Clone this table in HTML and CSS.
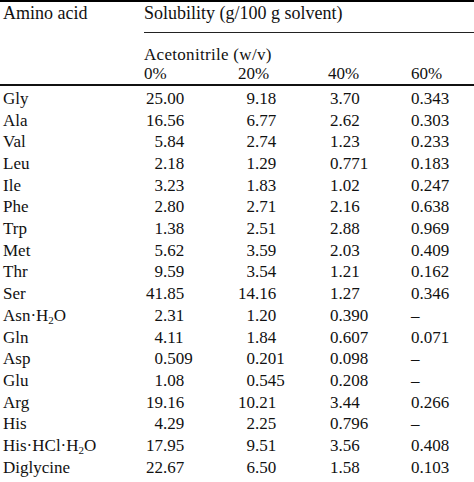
FILE: index.html
```html
<!DOCTYPE html>
<html lang="en">
<head>
<meta charset="utf-8">
<title>Amino acid solubility</title>
<link rel="stylesheet" href="styles.css">
</head>
<body>
<div class="tbl">
  <div class="head">
    <div class="h-label">Amino acid</div>
    <div class="h-main">
      <div class="h-sol">Solubility (g/100 g solvent)</div>
      <div class="h-ace">Acetonitrile (w/v)</div>
      <div class="h-cols"><span>0%</span><span>20%</span><span>40%</span><span>60%</span></div>
    </div>
  </div>
  <div class="body">
    <div class="row"><span class="name">Gly</span><span class="c1"><span class="i">25</span>.00</span><span class="c2"><span class="i">9</span>.18</span><span class="c3"><span class="i">3</span>.70</span><span class="c4"><span class="i">0</span>.343</span></div>
    <div class="row"><span class="name">Ala</span><span class="c1"><span class="i">16</span>.56</span><span class="c2"><span class="i">6</span>.77</span><span class="c3"><span class="i">2</span>.62</span><span class="c4"><span class="i">0</span>.303</span></div>
    <div class="row"><span class="name">Val</span><span class="c1"><span class="i">5</span>.84</span><span class="c2"><span class="i">2</span>.74</span><span class="c3"><span class="i">1</span>.23</span><span class="c4"><span class="i">0</span>.233</span></div>
    <div class="row"><span class="name">Leu</span><span class="c1"><span class="i">2</span>.18</span><span class="c2"><span class="i">1</span>.29</span><span class="c3"><span class="i">0</span>.771</span><span class="c4"><span class="i">0</span>.183</span></div>
    <div class="row"><span class="name">Ile</span><span class="c1"><span class="i">3</span>.23</span><span class="c2"><span class="i">1</span>.83</span><span class="c3"><span class="i">1</span>.02</span><span class="c4"><span class="i">0</span>.247</span></div>
    <div class="row"><span class="name">Phe</span><span class="c1"><span class="i">2</span>.80</span><span class="c2"><span class="i">2</span>.71</span><span class="c3"><span class="i">2</span>.16</span><span class="c4"><span class="i">0</span>.638</span></div>
    <div class="row"><span class="name">Trp</span><span class="c1"><span class="i">1</span>.38</span><span class="c2"><span class="i">2</span>.51</span><span class="c3"><span class="i">2</span>.88</span><span class="c4"><span class="i">0</span>.969</span></div>
    <div class="row"><span class="name">Met</span><span class="c1"><span class="i">5</span>.62</span><span class="c2"><span class="i">3</span>.59</span><span class="c3"><span class="i">2</span>.03</span><span class="c4"><span class="i">0</span>.409</span></div>
    <div class="row"><span class="name">Thr</span><span class="c1"><span class="i">9</span>.59</span><span class="c2"><span class="i">3</span>.54</span><span class="c3"><span class="i">1</span>.21</span><span class="c4"><span class="i">0</span>.162</span></div>
    <div class="row"><span class="name">Ser</span><span class="c1"><span class="i">41</span>.85</span><span class="c2"><span class="i">14</span>.16</span><span class="c3"><span class="i">1</span>.27</span><span class="c4"><span class="i">0</span>.346</span></div>
    <div class="row"><span class="name">Asn·H<sub>2</sub>O</span><span class="c1"><span class="i">2</span>.31</span><span class="c2"><span class="i">1</span>.20</span><span class="c3"><span class="i">0</span>.390</span><span class="c4"><span class="i">–</span></span></div>
    <div class="row"><span class="name">Gln</span><span class="c1"><span class="i">4</span>.11</span><span class="c2"><span class="i">1</span>.84</span><span class="c3"><span class="i">0</span>.607</span><span class="c4"><span class="i">0</span>.071</span></div>
    <div class="row"><span class="name">Asp</span><span class="c1"><span class="i">0</span>.509</span><span class="c2"><span class="i">0</span>.201</span><span class="c3"><span class="i">0</span>.098</span><span class="c4"><span class="i">–</span></span></div>
    <div class="row"><span class="name">Glu</span><span class="c1"><span class="i">1</span>.08</span><span class="c2"><span class="i">0</span>.545</span><span class="c3"><span class="i">0</span>.208</span><span class="c4"><span class="i">–</span></span></div>
    <div class="row"><span class="name">Arg</span><span class="c1"><span class="i">19</span>.16</span><span class="c2"><span class="i">10</span>.21</span><span class="c3"><span class="i">3</span>.44</span><span class="c4"><span class="i">0</span>.266</span></div>
    <div class="row"><span class="name">His</span><span class="c1"><span class="i">4</span>.29</span><span class="c2"><span class="i">2</span>.25</span><span class="c3"><span class="i">0</span>.796</span><span class="c4"><span class="i">–</span></span></div>
    <div class="row"><span class="name">His·HCl·H<sub>2</sub>O</span><span class="c1"><span class="i">17</span>.95</span><span class="c2"><span class="i">9</span>.51</span><span class="c3"><span class="i">3</span>.56</span><span class="c4"><span class="i">0</span>.408</span></div>
    <div class="row"><span class="name">Diglycine</span><span class="c1"><span class="i">22</span>.67</span><span class="c2"><span class="i">6</span>.50</span><span class="c3"><span class="i">1</span>.58</span><span class="c4"><span class="i">0</span>.103</span></div>
  </div>
</div>
</body>
</html>
```
FILE: styles.css
```css
html, body {
  margin: 0;
  padding: 0;
  background: #fff;
}
body {
  font-family: "Liberation Serif", "Times New Roman", serif;
  color: #111;
}
.tbl {
  width: 474px;
  border-top: 2px solid #000;
}
.head {
  display: grid;
  grid-template-columns: 144px 1fr;
  border-bottom: 2px solid #111;
  font-size: 18px;
}
.h-label {
  padding-left: 3px;
  padding-top: 1px;
  line-height: 21.6px;
}
.h-sol {
  padding-top: 1px;
  line-height: 21.6px;
  height: 29px;
  border-bottom: 1px solid #222;
}
.h-ace {
  padding-top: 11.8px;
  font-size: 17px;
  letter-spacing: 0.3px;
  line-height: 19.6px;
}
.h-cols {
  display: grid;
  grid-template-columns: 94px 90px 83px 1fr;
  font-size: 17px;
  line-height: 19.6px;
}
.body {
  padding-top: 2px;
  font-size: 17px;
}
.row {
  display: grid;
  grid-template-columns: 144px 94px 90px 83px 1fr;
  line-height: 21.7px;
  height: 21.7px;
  white-space: nowrap;
}
.name {
  padding-left: 3px;
}
.name sub {
  font-size: 11px;
  line-height: 0;
  vertical-align: -3px;
}
.i {
  display: inline-block;
  text-align: right;
}
.c1 .i { width: 19px; }
.c2 .i { width: 17px; }
.c3 .i { width: 10.5px; }
.c4 .i { width: 8.5px; }
```
